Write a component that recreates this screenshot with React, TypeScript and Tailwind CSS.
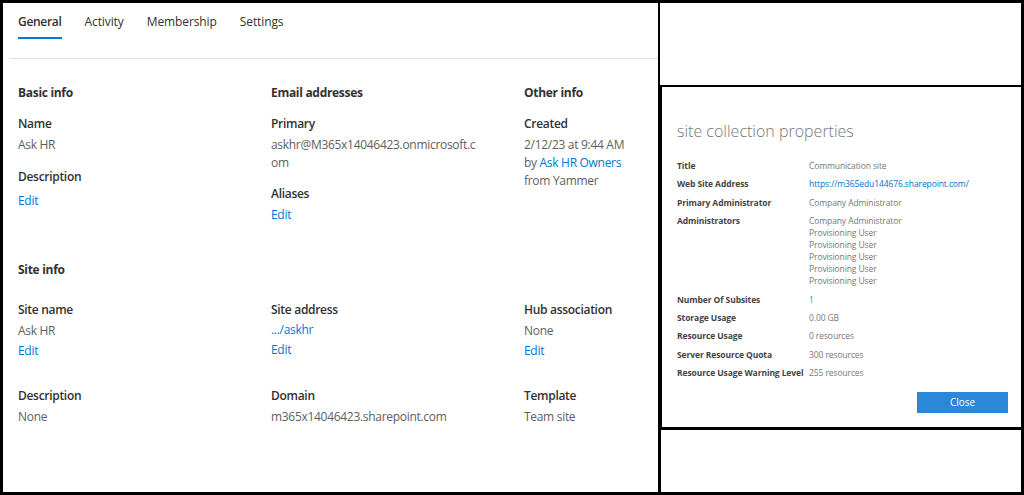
import React from "react";

const font = { fontFamily: '"Open Sans", "Noto Sans", Arial, sans-serif' };

function Label({ children, className = "" }: { children: React.ReactNode; className?: string }) {
  return <div className={`text-[12px] leading-[18px] tracking-[-0.3px] font-semibold text-[#323130] ${className}`}>{children}</div>;
}

function Value({ children, className = "" }: { children: React.ReactNode; className?: string }) {
  return <div className={`text-[12px] leading-[18px] tracking-[-0.3px] text-[#605e5c] ${className}`}>{children}</div>;
}

function EditLink({ className = "" }: { className?: string }) {
  return <div className={`text-[12px] leading-[18px] tracking-[-0.3px] text-[#0078d4] ${className}`}>Edit</div>;
}

function Heading({ children, className = "" }: { children: React.ReactNode; className?: string }) {
  return <div className={`text-[12px] leading-[18px] tracking-[-0.3px] font-bold text-[#323130] ${className}`}>{children}</div>;
}

const tabs = ["General", "Activity", "Membership", "Settings"];

function GroupPanel() {
  return (
    <div className="h-[495px] w-[660px] shrink-0 border-t-[3px] border-b-[3px] border-l-[3px] border-r-2 border-black bg-white">
      {/* tabs */}
      <div className="flex gap-[23px] pl-[15px]">
        {tabs.map((t, i) => (
          <div
            key={t}
            className={`pt-[10px] pb-[6px] text-[12px] leading-[18px] border-b-2 ${
              i === 0
                ? "border-[#0078d4] font-semibold tracking-[-0.3px] text-[#323130]"
                : "border-transparent tracking-[-0.1px] text-[#323130]"
            }`}
          >
            {t}
          </div>
        ))}
      </div>
      <div className="ml-[7px] mt-[19px] h-px bg-[#e1dfdd]" />

      {/* basic info */}
      <div className="mt-[25px] grid grid-cols-[253px_253px_1fr] pl-[15px]">
        <div>
          <Heading>Basic info</Heading>
          <Label className="mt-[13px]">Name</Label>
          <Value className="mt-[3px]">Ask HR</Value>
          <Label className="mt-[14px]">Description</Label>
          <EditLink className="mt-[6px]" />
        </div>
        <div>
          <Heading>Email addresses</Heading>
          <Label className="mt-[13px]">Primary</Label>
          <Value className="mt-[3px] w-[208px] break-all leading-[17px]">askhr@M365x14046423.onmicrosoft.com</Value>
          <Label className="mt-[13px]">Aliases</Label>
          <EditLink className="mt-[3px]" />
        </div>
        <div>
          <Heading>Other info</Heading>
          <Label className="mt-[13px]">Created</Label>
          <Value className="mt-[3px] leading-[17.2px]">
            2/12/23 at 9:44 AM
            <br />
            by <span className="text-[#0078d4]">Ask HR Owners</span>
            <br />
            from Yammer
          </Value>
        </div>
      </div>

      {/* site info */}
      <div className="pl-[15px]">
        <Heading className="mt-[37px]">Site info</Heading>
        <div className="mt-[22px] grid grid-cols-[253px_253px_1fr]">
          <div>
            <Label>Site name</Label>
            <Value className="mt-[3px]">Ask HR</Value>
            <EditLink className="mt-[2px]" />
          </div>
          <div>
            <Label>Site address</Label>
            <div className="mt-[2px] text-[12px] leading-[18px] tracking-[-0.3px] text-[#0078d4]">.../askhr</div>
            <EditLink className="mt-[2px]" />
          </div>
          <div>
            <Label>Hub association</Label>
            <Value className="mt-[3px]">None</Value>
            <EditLink className="mt-[2px]" />
          </div>
          <div className="mt-[27px]">
            <Label>Description</Label>
            <Value className="mt-[3px]">None</Value>
          </div>
          <div className="mt-[27px]">
            <Label>Domain</Label>
            <Value className="mt-[3px]">m365x14046423.sharepoint.com</Value>
          </div>
          <div className="mt-[27px]">
            <Label>Template</Label>
            <Value className="mt-[3px]">Team site</Value>
          </div>
        </div>
      </div>
    </div>
  );
}

const props: { label: string; values: string[]; link?: boolean }[] = [
  { label: "Title", values: ["Communication site"] },
  { label: "Web Site Address", values: ["https://m365edu144676.sharepoint.com/"], link: true },
  { label: "Primary Administrator", values: ["Company Administrator"] },
  {
    label: "Administrators",
    values: [
      "Company Administrator",
      "Provisioning User",
      "Provisioning User",
      "Provisioning User",
      "Provisioning User",
      "Provisioning User",
    ],
  },
  { label: "Number Of Subsites", values: ["1"] },
  { label: "Storage Usage", values: ["0.00 GB"] },
  { label: "Resource Usage", values: ["0 resources"] },
  { label: "Server Resource Quota", values: ["300 resources"] },
  { label: "Resource Usage Warning Level", values: ["255 resources"] },
];

function PropertiesDialog() {
  return (
    <div className="h-[343px] border-l-2 border-r-[3px] border-b-[3px] border-black bg-white pl-[15px] pr-[13px]">
      <div className="pt-[33px] text-[16px] leading-[22px] font-light text-[#767676]">site collection properties</div>
      <div className="mt-[18px] flex flex-col gap-[6.4px]">
        {props.map((p) => (
          <div key={p.label} className="flex text-[8.5px] leading-[12px] tracking-[-0.1px]">
            <div className="w-[132px] shrink-0 font-bold text-[#444444]">{p.label}</div>
            <div className="flex flex-col">
              {p.values.map((v, i) => (
                <div key={i} className={p.link ? "text-[#0072c6]" : "text-[#777777]"}>
                  {v}
                </div>
              ))}
            </div>
          </div>
        ))}
      </div>
      <div className="mt-[13px] flex justify-end">
        <div className="flex h-[21px] w-[91px] items-center justify-center bg-[#2b88d8] text-[10px] text-white">Close</div>
      </div>
    </div>
  );
}

export default function App() {
  return (
    <div className="flex h-[495px] w-[1024px] bg-white" style={font}>
      <GroupPanel />
      <div className="flex w-[364px] flex-col">
        <div className="h-[87px] border-t-[3px] border-r-[3px] border-b-2 border-black bg-white" />
        <PropertiesDialog />
        <div className="flex-1 border-l border-r-[3px] border-b-[3px] border-black bg-white" />
      </div>
    </div>
  );
}
